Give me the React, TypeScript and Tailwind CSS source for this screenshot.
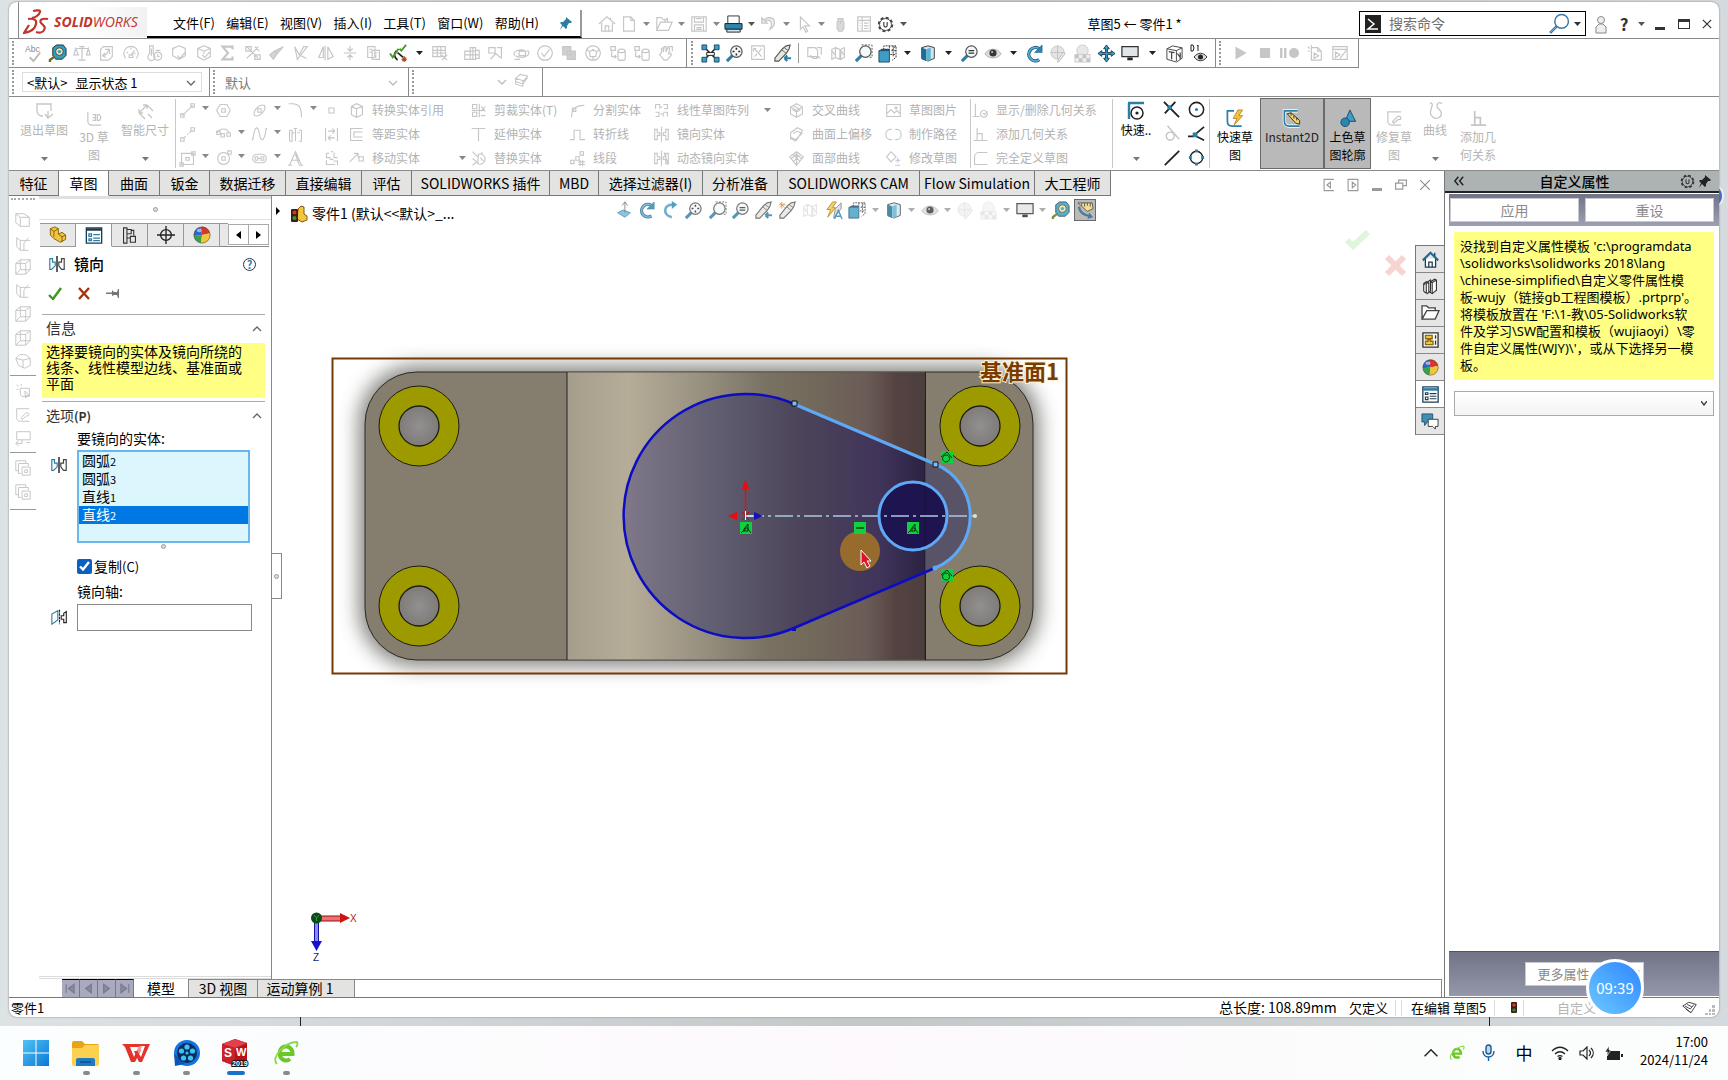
import React, { useState } from 'react';
import type { ReactNode } from 'react';

/* ---------- icon primitives ---------- */

type GProps = { d: string; c?: string; f?: string; w?: number; s?: number; children?: ReactNode };

function G({ d, c = '#c6c6c6', f = 'none', w = 1.3, s = 18, children }: GProps) {
  return (
    <svg width={s} height={s} viewBox="0 0 20 20" fill={f} stroke={c} strokeWidth={w} className="shrink-0">
      <path d={d} />
      {children}
    </svg>
  );
}

const BLUE = '#2b7ea6';
const DARK = '#222';

const P: Record<string, string> = {
  abc: 'M5 14l4 4 7-9',
  scales: 'M10 2v16M6 18h8M3 5h14M3 5l-2 7h5zM17 5l-2 7h4zM7 3h6',
  box1: 'M4 6l3-3h10v11l-4 4H4zM9 6h5v5M13 6c-1 5-3 7-7 7m0 0l3-3m-3 3l4 2',
  gauge: 'M4 16a8 8 0 1 1 12 0M10 12l4-5M5 9l2 1M10 4v2M15 10l-2 1M8 12h4v3H8z',
  therm: 'M4 2h4v9a4 4 0 1 1-4 0zM6 5v8M11 7h5M13 9a4.500 4.500 0 1 0 .1 0M13 11v3h2',
  shield: 'M10 2l7 3v8l-7 4-7-4V5zM3 5l2 0M8 13l3 3 6-7',
  cube: 'M10 2l7 3v9l-7 4-7-4V5zM3 5l7 3 7-3M10 8v10',
  cubeCheck: 'M10 2l7 3v9l-7 4-7-4V5zM3 5l7 3 7-3M10 8v3M8 12l3 3 5-6',
  cross: 'M3 3l13 13M3 16L16 3M2 3h6v5H2zM12 12h6v5h-6zM12 3l5 5',
  brush: 'M17 3l-7 8-3-3zM10 11l-4 6-4-5 5-4',
  slash: 'M3 3l3 14L17 3h-4l-5 9zM10 13l6 3',
  tri: 'M9 2v16M7 3v12H2zM12 3l6 11-6 3z',
  origin: 'M10 2v6m-3-3l3 3 3-3M3 10h14M10 18v-6m-3 3l3-3 3 3',
  docq: 'M3 3h8v12H3zM8 7h8v10H8zM10 10h4M12 12v3M5 6h3M5 9h2',
  table: 'M2 3h14v11H2zM2 7h14M2 10h14M7 3v11M11 3v11M12 12l6 6m0-6l-6 6',
  grid3: 'M2 8h6v9H2zM8 4h6v13H8zM14 7h4v9h-4zM2 12h16M8 8h6M11 4v13',
  flow: 'M2 4h7v6H2zM9 10l7 6M16 3v13M4 17l6-7M11 4l6 0',
  spin: 'M3 13a7 4 0 0 1 13-4M17 7a7 4 0 0 1-13 6M8 8h7v5H8zM3 17h6',
  okc: 'M10 2a8 8 0 1 0 .1 0zM6 10l3 4 6-8',
  sq2: 'M3 3h9v9H3zM8 8h9v9H8z',
  ring: 'M10 2a8 8 0 1 0 .1 0zM10 6l4 3-1 5H7L6 9zM3 6l4 3M17 6l-3 3M10 18v-4',
  cyl: 'M10 8c0-3 8-3 8 0v8c0 3-8 3-8 0zM10 8c0 2 8 2 8 0M2 3h5v4H2zM3 8v6h5m-2-2l2 2-2 2',
  hand: 'M5 9V5l2-1v5l1-6 2 0v6l2-5 2 1-1 6 2-1 1 2-5 6H8l-5-6zM12 3h5v5',
  doc: 'M4 2h8l4 4v12H4zM12 2v4h4',
  home: 'M1 10l9-8 9 8M4 9v9h12V9M8 18v-6h4v6M14 3v3',
  open: 'M2 17V3h5l2 2h5v3M2 17l4-9h13l-4 9zM10 8l4-5',
  save: 'M2 2h16v16H2zM5 2v6h10V2M5 18v-7h10v7M7 4h6M7 14h6M7 16h6',
  undo: 'M2 3v6h6L6 7c5-3 9 1 5 9 7-4 7-13-1-13-2 0-4 1-5 3z',
  arrow: 'M6 2v14l3-3 3 6 2-1-3-6h5z',
  mouse: 'M7 3h6v3l1 1v8l-2 3H8l-2-3V7l1-1zM10 5v4',
  list: 'M3 2h14v16H3zM3 6h14M8 2v16M5 9h1M5 12h1M5 15h1M10 9h5M10 12h5M10 15h5',
  zoomFit: 'M3 2h14v15H3zM6 5l8 9M14 5l-3 4M6 14l3-3M5 5h3M5 5v3',
  prev: 'M2 4h8l3 3v7H2zM5 12a5 5 0 0 0 9 2m0 0l2 2m-2-2l-3 1M12 4h5v8',
  section: 'M2 6l4-2v11l-4 2zM6 4l5 2v11l-5-2M12 6l4-2v11l-4 2zM3 8l2 4M13 8l2 4',
  sheet: 'M3 3h12v14H3zM6 7h6M6 10h6M10 17l7-9',
  line: 'M4 16L16 4M14 2h4v4h-4zM2 14h4v4H2z',
  cline: 'M6 14l2-2M10 10l1-1M12 8l2-2M14 2h4v4h-4zM2 14h4v4H2z',
  rect: 'M3 4h14v13H3zM15 2h4v4h-4zM8 9h4v3H8zM1 15h4v4H1z',
  hex: 'M6 3h8l4 7-4 7H6l-4-7zM8 8h4v4H8z',
  ellipse: 'M4 16A9 6.500 -45 0 1 16 4A9 6.500 -45 0 1 4 16zM8 8h4v4H8z',
  fillet: 'M2 2h4c8 0 11 4 11 16M2 2h3',
  pointI: 'M7 7h6v6H7z',
  arc: 'M3 8c2-6 12-6 13 0M2 6h4v4H2zM14 8h4v4h-4zM7 9h4v4H7z',
  spline: 'M2 17C5-6 9 3 10 10s5 12 8-7M1 15h2M17 3h2',
  planeI: 'M3 5h3v13H3M3 5v13M10 2v16M14 5h3v13h-3M8 3h4M6 8h3M12 8h3',
  circle: 'M10 3a7 7 0 1 0 .1 0zM15 1h4v4h-4zM8 8h4v4H8z',
  slot: 'M7 5h6a5 5 0 0 1 0 10H7A5 5 0 0 1 7 5zM5 8h3v4H5zM12 8h3v4h-3zM8 10h4',
  textA: 'M3 18L10 2l7 16M6 12h8M1 18h5M14 18h5M10 5l4 12',
  flip: 'M3 2v16M17 2v16M6 6h8m0 0l-3-3m3 3l-3 3M14 14H6m0 0l3-3m-3 3l3 3',
  pat: 'M4 4v5h5M4 4h3M13 3v6h4M4 12v5h4M12 13h5v5M9 2h3M8 11h4M8 17h6',
  convert: 'M4 5l6-3 7 3v10l-7 3-6-3zM4 5l6 3 7-3M10 8v10',
  offset: 'M17 3H3v14h14M17 7H7v6h10',
  move: 'M2 14L12 4m0 0H7m5 0v5M13 8h5v5h-5z',
  trim: 'M3 3h5v5H3zM11 2v16M3 12h5v5H3zM13 5l5 6m0-6l-5 6M2 10h16M13 16h5',
  extend: 'M2 3h16M10 3v15',
  replace: 'M3 2l6 6M10 5a6 6 0 1 1-1 11zM12 9l4 4M3 10l5 4-5 4M14 2v3',
  split: 'M3 18C3 8 8 4 18 4M4 7h4v4H4z',
  jog: 'M1 16h5V5h7v11h6',
  seg: 'M2 12h4v4H2zM8 8h4v4H8zM13 2h4v4h-4zM13 12v7M16 12v7M11 14h8M11 17h8',
  linp: 'M3 3h5v5M12 3h5v5h-4M3 12h4v5H3M12 12h5v5M3 3v5M9 6h2M9 14h2M12 13v4',
  mirror: 'M10 1v18M2 4v12h3v-5h3V8H5V4zM18 4v12h-3v-5h-3V8h3V4z',
  dmirror: 'M10 1v18M2 4v12h3v-5h3V8H5V4zM18 4v12h-3v-5h-3V8h3V4zM13 3l5 14',
  inter: 'M10 2l7 4v8l-7 4-7-4V6zM3 6l7 4 7-4M10 10v8M5 9l5 3 5-3M6 4l7 4',
  surfoff: 'M3 8l8-6 6 3-7 12-7-2zM6 9l5-3 4 2M3 13l7 4M7 18l10-10',
  face: 'M10 2l8 6-8 10L2 8zM6 5l8 8M4 10l6-5 6 5M7 13l6-7M10 2v16',
  pic: 'M2 3h16v14H2zM2 14l5-5 4 4 3-3 4 4M12 6h2v2h-2z',
  path: 'M8 4H6a5 6 0 0 0 0 12h2M12 4h2a5 6 0 0 1 0 12h-2',
  modify: 'M7 2l6 6-6 6-5-6zM15 9v6M12 12h6M12 18h6',
  rel: 'M4 2v15M1 17h8M14 10a4 4 0 1 0 .1 0M13 13l2 2 3-4',
  addrel: 'M6 2v15M2 17h16M6 9h6v8',
  fulld: 'M18 3H8a5 5 0 0 0-5 5v9h15',
  exit: 'M9 15H8a5 5 0 0 1-5-5V3h14v7M11 13l3 4 5-4M14 17V10',
  sk3d: 'M3 3v10a4 4 0 0 0 4 4h10M8 6h3v6H8M8 9h3M13 6h2c2 1 2 5 0 6h-2z',
  dim: 'M4 12l8-8m0 0H8m4 0v4M12 4l6 6M4 12l6 6M4 12V8m0 4h4M13 13l4 4',
  repair: 'M17 3H3v9a4 4 0 0 0 4 5h10M8 13l5-5a2 2 0 1 1 3 3l-2 0-5 4z',
  curve: 'M5 2c6 0-2 8 1 12 4 6 12 3 10-3-2-4-5-4-4-7 1-3 4-3 5-1',
  vcube: 'M2 6l5-4h10v10l-5 5H2zM2 6h10v11M12 6l5-4',
  vcube2: 'M2 3h9l6 4v10H7l-5-4zM7 7h10M7 7v10M2 3l5 4',
  vcube3: 'M2 6l5-4h11v11l-5 5H2zM2 6h11v12M13 6l5-4M7 2v11h11M7 13l-5 5',
  vcube4: 'M3 3l4 3v11l-4-4zM7 6h11M7 17h9M16 3l-5 6v8',
  vcube5: 'M2 7l4-4h7l5 4v8l-6 3-7-3zM10 9l8-2M10 9v9M10 9L2 7',
  skn: 'M7 7h10v9H9a3 3 0 0 1-2-3zM3 3l2 2M3 8h2M8 2v2M12 10l5 5-3 0-1 3z',
  moni: 'M3 3h15v9H3zM9 12v4H2m3-3l-3 3 3 3M14 15h4',
  lay: 'M2 2h11v3M2 2v11h3M5 5h11v3M5 5v11h3M9 9h9v9H9zM12 12h3v3h-3z',
  play: 'M5 3l12 7-12 7z',
  docp: 'M6 4h7l4 4v10H6zM13 4v4h4M2 3l2 2M9 10l5 3-5 3zM2 8h2M6 1v2',
  macro: 'M2 3h16v14H2zM2 6h16M5 9l5 3-5 3zM10 16l7-9',
};

/* ---------- coloured icons ---------- */

function Magnifier({ inner, s = 19 }: { inner?: ReactNode; s?: number }) {
  return (
    <svg width={s} height={s} viewBox="0 0 20 20" fill="none" className="shrink-0">
      <path d="M8 12l-6 6" stroke="#2b7ea6" strokeWidth="3.2" />
      <circle cx="12" cy="8" r="6" fill="#f4f8fa" stroke="#555" strokeWidth="1.3" />
      {inner}
    </svg>
  );
}

function GearIcon({ c = '#444', s = 17 }: { c?: string; s?: number }) {
  return (
    <svg width={s} height={s} viewBox="0 0 20 20" fill="none" stroke={c} className="shrink-0">
      <circle cx="10" cy="10" r="8" strokeWidth="2.200" strokeDasharray="3.600 2.680" />
      <circle cx="10" cy="10" r="7" strokeWidth="1.100" />
      <path d="M8 7v4a2 2 0 0 0 4 0V7" strokeWidth="1.400" />
    </svg>
  );
}

function Eye({ s = 18 }: { s?: number }) {
  return (
    <svg width={s} height={s} viewBox="0 0 20 20" className="shrink-0">
      <path d="M1 11c4-7 14-7 18 0-4 6-14 6-18 0z" fill="#ddd" stroke="#999" strokeWidth=".8" />
      <circle cx="10" cy="10" r="4" fill="#3a3632" />
      <circle cx="9" cy="9" r="1.2" fill="#bbb" />
    </svg>
  );
}

function Rotate({ s = 19 }: { s?: number }) {
  return (
    <svg width={s} height={s} viewBox="0 0 20 20" fill="none" className="shrink-0">
      <path d="M15 16.500A7 7 0 1 1 15 5" stroke="#1f5c80" strokeWidth="3.6" />
      <path d="M15 16.500A7 7 0 1 1 15 5" stroke="#5cb0d6" strokeWidth="1.8" />
      <path d="M18 1v8h-8z" fill="#2b86b3" stroke="#1f5c80" strokeWidth=".6" />
    </svg>
  );
}

function Tape({ s = 19 }: { s?: number }) {
  return (
    <svg width={s} height={s} viewBox="0 0 20 20" className="shrink-0">
      <path d="M5 4l4-3h7l3 4v7l-4 4H8l-3-4z" fill="#2f9dbb" stroke="#234" />
      <circle cx="12" cy="8" r="4" fill="#f4e7a0" stroke="#234" strokeWidth=".8" />
      <circle cx="12" cy="8" r="1.800" fill="#2f9dbb" />
      <path d="M7 13l-5 4v2" fill="none" stroke="#6b6a1e" strokeWidth="2.400" />
    </svg>
  );
}

function CubeBlue({ s = 18 }: { s?: number }) {
  return (
    <svg width={s} height={s} viewBox="0 0 20 20" className="shrink-0">
      <path d="M3 4l7-2 7 2v12l-7 3-7-3z" fill="#cfe6ef" stroke="#333" />
      <path d="M3 4l5 2v13l-5-2z" fill="#1f6d92" />
      <path d="M8 6l5-2v14l-5 1z" fill="#5fb2d2" />
    </svg>
  );
}

function CubeDash({ s = 19 }: { s?: number }) {
  return (
    <svg width={s} height={s} viewBox="0 0 20 20" fill="none" className="shrink-0">
      <path d="M6 6V2h13v12l-4 3M12 2v5M19 7h-6M16 2v12M13 11h6M15 6l4-4" stroke="#333" strokeDasharray="2 1" />
      <path d="M1 7h11v12H1z" fill="#3f9cc4" stroke="#1c4d66" />
      <path d="M1 7l3-2h8v2z" fill="#1c4d66" />
    </svg>
  );
}

function Monitor({ s = 18 }: { s?: number }) {
  return (
    <svg width={s} height={s} viewBox="0 0 20 20" className="shrink-0">
      <path d="M1 3h18v11H1z" fill="#e2e5e7" stroke="#333" strokeWidth="1.400" />
      <path d="M7 18h6v-3H7z" fill="#222" />
    </svg>
  );
}

function Flash({ star, s = 19 }: { star?: boolean; s?: number }) {
  return (
    <svg width={s} height={s} viewBox="0 0 20 20" fill="none" className="shrink-0">
      <path d="M18 1l-4 1-4 3-8 10v3h4l8-8 3-5z" fill="#e9e6df" stroke="#555" strokeWidth="1.200" />
      <path d="M9 6l5 4M12 4l4 3" stroke="#666" />
      {star ? (
        <path d="M4 1v7M1 4h7M2 2l5 5M7 2L2 7" stroke="#d58a2a" />
      ) : (
        <path d="M19 15h-7m0 0l3-3m-3 3l3 3" stroke="#2b7ea6" strokeWidth="2.200" />
      )}
    </svg>
  );
}

function Ball({ s = 18 }: { s?: number }) {
  return (
    <svg width={s} height={s} viewBox="0 0 20 20" className="shrink-0">
      <path d="M10 10L8 1a9 9 0 0 0-7 10z" fill="#2f66c4" />
      <path d="M10 10l9-2A9 9 0 0 0 8 1z" fill="#d8352c" />
      <path d="M10 10l-9 1a9 9 0 0 0 8 8z" fill="#38a24a" />
      <path d="M10 10l-1 9a9 9 0 0 0 10-11z" fill="#f0c63a" />
      <circle cx="10" cy="10" r="9" fill="none" stroke="#444" strokeWidth=".6" />
      <ellipse cx="7" cy="5" rx="3" ry="2" fill="#fff" opacity=".5" />
    </svg>
  );
}

const fitIcon = (
  <svg width="19" height="19" viewBox="0 0 20 20" fill="none" className="shrink-0">
    <path d="M4 4l12 12M16 4L4 16" stroke="#222" strokeWidth="1.600" />
    <path d="M6 9h8v3H6z" fill="#fff" stroke="#222" />
    <path d="M1 1h5v5H1zM14 1h5v5h-5zM1 14h5v5H1zM14 14h5v5h-5z" fill="#3f9cc4" stroke="#1c4d66" />
  </svg>
);
const magFit = <Magnifier inner={<path d="M12 4v2M12 10v2M8 8h2M14 8h2" stroke="#222" strokeWidth="1.600" />} />;
const magBox = (
  <Magnifier inner={<path d="M8 1h11v13h-4" stroke="#555" strokeDasharray="2 1.500" />} />
);
const magEq = <Magnifier inner={<path d="M9 7h6M9 9.500h6" stroke="#333" strokeWidth="1.300" />} />;
const panIcon = (
  <svg width="19" height="19" viewBox="0 0 20 20" className="shrink-0">
    <path
      d="M10 1l3 4h-2v4h4V7l4 3-4 3v-2h-4v4h2l-3 4-3-4h2v-4H5v2l-4-3 4-3v2h4V5H7z"
      fill="#3f9cc4"
      stroke="#1c3c50"
    />
  </svg>
);
const paleBall = (
  <svg width="19" height="19" viewBox="0 0 20 20" className="shrink-0">
    <circle cx="9" cy="9" r="7" fill="#e4e4e4" stroke="#c8c8c8" />
    <path d="M9 2v14M2 9h14" stroke="#c2c2c2" />
    <path d="M17 10l-6 8-2 1 1-3 5-7z" fill="#f3f3f3" stroke="#bbb" />
  </svg>
);
const paleScene = (
  <svg width="19" height="19" viewBox="0 0 20 20" className="shrink-0">
    <circle cx="10" cy="7" r="6" fill="#e8e8e8" stroke="#ccc" />
    <path d="M2 11h16v8H2z" fill="#eee" stroke="#ccc" />
    <path d="M2 11h4v4H2zM10 11h4v4h-4zM6 15h4v4H6zM14 15h4v4h-4z" fill="#c4c4c4" />
  </svg>
);
const printIcon = (
  <svg width="19" height="19" viewBox="0 0 20 20" className="shrink-0">
    <path d="M4 1h12v8H4z" fill="#fff" stroke="#333" />
    <path d="M1 9h18v6H1z" fill="#2b86b3" stroke="#222" />
    <path d="M3 15h14v3H3z" fill="#cfe6ef" stroke="#222" />
  </svg>
);
const tex3d = (
  <svg width="19" height="19" viewBox="0 0 20 20" fill="none" className="shrink-0">
    <path d="M2 5l6-3 10 2v11l-6 4-10-3zM2 5l10 2v11M12 7l6-3" stroke="#444" />
    <path d="M4 8l6 1M7 9v7M13 10l3 4M16 9v7" stroke="#444" strokeWidth="1.300" />
  </svg>
);
const checkSketch = (
  <svg width="19" height="19" viewBox="0 0 20 20" fill="none" className="shrink-0">
    <path d="M8 7c-3 3-3 7 1 10M9 9l6 5" stroke="#222" strokeWidth="1.800" />
    <path d="M1 10l3 4 6-9" stroke="#4b9b2c" strokeWidth="2" />
    <path d="M11 5l2 2 5-6" stroke="#4b9b2c" strokeWidth="2" />
    <path d="M13 16h6M16 13v6M14 14l4 4M18 14l-4 4" stroke="#b4441c" strokeWidth="1.200" />
  </svg>
);
const sigma = <G d="M15 6V3H4l6 7-6 7h11v-3" w={2.4} />;
const play = <G d={P.play} f="#c6c6c6" s={16} />;
const stop = <G d="M5 5h10v10H5z" f="#c6c6c6" />;
const pauseRec = (
  <svg width="20" height="18" viewBox="0 0 20 18" fill="#c6c6c6" className="shrink-0">
    <path d="M0 4h2.500v10H0zM4 4h2.500v10H4z" />
    <circle cx="14" cy="9" r="5" />
  </svg>
);
const normalTo = (
  <svg width="18" height="18" viewBox="0 0 20 20" fill="none" className="shrink-0">
    <path d="M3 13l6-3 8 3-6 5z" fill="#6fb9da" stroke="#2b7ea6" />
    <path d="M11 13V1m-3 4l3-4 3 4" stroke="#666" />
  </svg>
);
const magnetA = (
  <svg width="19" height="19" viewBox="0 0 20 20" fill="none" className="shrink-0">
    <path d="M8 1L2 9h4l-3 8 8-10H8l4-6z" fill="#f2c53a" stroke="#a9781a" />
    <path d="M11 8l6-6v6l-8 10z" fill="#ddd" stroke="#777" />
    <path d="M10 19l4-9 4 9M12 16h4" stroke="#2b7ea6" strokeWidth="1.500" />
  </svg>
);
const d1Eye = (
  <svg width="20" height="19" viewBox="0 0 20 19" className="shrink-0">
    <path d="M3 1v6M3 1h2l1 3-1 3H3M9 2l1-1v6" stroke="#222" fill="none" />
    <path d="M6 13c4-5 9-5 13 0-4 5-9 5-13 0z" fill="#ddd" stroke="#333" />
    <circle cx="12.500" cy="13" r="2.500" fill="#222" />
  </svg>
);

/* ---------- generic controls ---------- */

const Tri = ({ c = '#555' }: { c?: string }) => (
  <svg width="7" height="4" viewBox="0 0 7 4" className="shrink-0">
    <path d="M0 0h7L3.500 4z" fill={c} />
  </svg>
);

function Drop({ w = 'w-[17px]', c, label = '更多选项' }: { w?: string; c?: string; label?: string }) {
  return (
    <button aria-label={label} className={`flex h-5 shrink-0 items-center justify-center ${w}`}>
      <Tri c={c} />
    </button>
  );
}

function Btn({ label, w = 'w-6', children }: { label: string; w?: string; children: ReactNode }) {
  return (
    <button aria-label={label} title={label} className={`flex h-6 shrink-0 items-center justify-center ${w}`}>
      {children}
    </button>
  );
}

const Grip = () => <span className="my-[2px] w-[3px] shrink-0 self-stretch border-l-2 border-dotted border-[#999]" />;

const Chevron = ({ c = '#666', up }: { c?: string; up?: boolean }) => (
  <svg width="10" height="6" viewBox="0 0 10 6" fill="none" stroke={c} strokeWidth="1.300" className="shrink-0">
    <path d={up ? 'M1 5l4-4 4 4' : 'M1 1l4 4 4-4'} />
  </svg>
);

/* ---------- title bar ---------- */

const menus = ['文件(F)', '编辑(E)', '视图(V)', '插入(I)', '工具(T)', '窗口(W)', '帮助(H)'];

function PinIcon({ c = '#2b7ea6' }: { c?: string }) {
  return (
    <svg width="12" height="13" viewBox="0 0 12 13" className="shrink-0">
      <path d="M6 0l6 5-1 1-2 0-2 3 0 2-1 1-3-3-3 4 2-5-2-2 1-1 2 0 3-3z" fill={c} />
    </svg>
  );
}

function TitleBar() {
  return (
    <header className="flex h-[37px] shrink-0 items-stretch border-b border-[#8a8a8a] pl-[9px]">
      <div className="flex shrink-0 items-end border-l border-[#888]">
        <div className="mb-px flex h-[30px] w-[128px] items-center gap-[5px] bg-gradient-to-r from-white via-white to-[#f1f1f3] pl-1">
          <svg width="26" height="26" viewBox="0 0 26 26" fill="none" stroke="#c1352b" strokeWidth="2.200" className="shrink-0">
            <path d="M10 2c4-1 8-1 7 1-1 3-4 5-8 6" />
            <path d="M5 10c6-1 9 1 8 5-1 5-6 8-12 9l5-8" />
            <path d="M25 10c-6-1-9 1-7 4 3 3 5 4 3 7-1 3-5 3-8 2" />
          </svg>
          <span className="font-['Open_Sans'] text-[14px] leading-5 text-[#c1352b] italic">
            <b>SOLID</b>WORKS
          </span>
        </div>
      </div>
      <nav className="mt-2 flex w-[435px] shrink-0 items-center border-r-2 border-b-2 border-r-[#999] border-b-black pl-[26px]">
        <div className="flex w-[366px] items-center justify-between text-[13px]">
          {menus.map((m) => (
            <button key={m}>{m}</button>
          ))}
        </div>
        <button aria-label="固定菜单" className="mr-2 ml-auto">
          <PinIcon />
        </button>
      </nav>
      <div className="mt-2 ml-[14px] flex items-center">
        <Btn label="主页" w="w-[22px]"><G d={P.home} /></Btn>
        <Btn label="新建" w="w-[21px]"><G d={P.doc} /></Btn>
        <Drop w="w-[14px]" c="#888" />
        <Btn label="打开" w="w-[21px]"><G d={P.open} /></Btn>
        <Drop w="w-[14px]" c="#888" />
        <Btn label="保存" w="w-[21px]"><G d={P.save} /></Btn>
        <Drop w="w-[14px]" c="#888" />
        <Btn label="打印" w="w-[21px]">{printIcon}</Btn>
        <Drop w="w-[14px]" />
        <Btn label="撤销" w="w-[21px]"><G d={P.undo} f="#ececec" /></Btn>
        <Drop w="w-[14px]" c="#888" />
        <Btn label="选择" w="w-[21px]"><G d={P.arrow} /></Btn>
        <Drop w="w-[14px]" c="#888" />
        <Btn label="重建模型" w="w-[24px]"><G d={P.mouse} f="#d9d9d9" s={17} /></Btn>
        <Btn label="文件属性" w="w-[23px]"><G d={P.list} /></Btn>
        <Btn label="选项" w="w-[21px]"><GearIcon /></Btn>
        <Drop w="w-[14px]" />
      </div>
      <div className="flex-1" />
      <h1 className="mt-2 flex items-center text-[13px] whitespace-nowrap">草图5 ← 零件1 *</h1>
      <div className="flex-1" />
      <label className="mt-[9px] mb-[2px] flex w-[227px] shrink-0 items-center border border-black">
        <svg width="16" height="18" viewBox="0 0 16 18" className="ml-[5px] shrink-0">
          <rect width="16" height="18" fill="#222" />
          <path d="M3 4l6 5-6 5h10" stroke="#fff" strokeWidth="1.500" fill="none" />
        </svg>
        <input aria-label="搜索命令" placeholder="搜索命令" className="ml-2 w-0 flex-1 bg-transparent text-[14px] outline-none placeholder:text-[#6f6f6f]" />
        <svg width="21" height="21" viewBox="0 0 20 20" fill="none" stroke="#3c79a8" className="shrink-0">
          <circle cx="12" cy="8" r="6.500" strokeWidth="1.400" />
          <path d="M7 12l-6 6 1 1 6-6" strokeWidth="1.200" />
        </svg>
        <Drop w="w-[15px]" c="#333" />
      </label>
      <div className="mt-2 flex shrink-0 items-center pl-[3px]">
        <Btn label="登录">
          <svg width="12" height="19" viewBox="0 0 12 19" fill="#eee" stroke="#8a8a8a">
            <circle cx="6" cy="5" r="3.500" />
            <path d="M1 18v-6l3-3h4l3 3v6z" />
          </svg>
        </Btn>
        <button className="w-[22px] text-[17px] leading-5 font-bold text-[#333]">?</button>
        <Drop w="w-[12px]" />
        <Btn label="最小化" w="w-[25px]"><span className="mt-2 h-[3px] w-[10px] bg-[#333]" /></Btn>
        <Btn label="最大化" w="w-[23px]"><span className="h-[10px] w-[12px] border border-t-[3px] border-[#333]" /></Btn>
        <Btn label="关闭"><G d="M3 3l14 14M17 3L3 17" c="#333" w={2} s={12} /></Btn>
      </div>
    </header>
  );
}

/* ---------- tool strip ---------- */

const toolsA: [string, ReactNode][] = [
  ['拼写检查', (
    <svg key="a" width="19" height="22" viewBox="0 0 20 23" fill="none" stroke="#b9b9b9">
      <path d="M6 16l4 4 7-9" strokeWidth="2" />
      <text x="1" y="10" fontSize="9" fill="#8a8a8a" stroke="none" className="font-['Liberation_Sans']">Abc</text>
    </svg>
  )],
  ['测量', <Tape key="t" />],
  ['质量属性', <G key="s" d={P.scales} />],
  ['截面属性', <G key="b" d={P.box1} />],
  ['传感器', <G key="g" d={P.gauge} />],
  ['统计', <G key="th" d={P.therm} />],
  ['检查', <G key="sh" d={P.shield} />],
  ['几何分析', <G key="c" d={P.cubeCheck} />],
  ['方程式', <span key="si">{sigma}</span>],
  ['偏差分析', <G key="x" d={P.cross} />],
  ['拔模分析', <G key="br" d={P.brush} f="#d4d4d4" />],
  ['底切分析', <G key="sl" d={P.slash} />],
  ['对称检查', <G key="tr" d={P.tri} />],
  ['厚度分析', <G key="o" d={P.origin} />],
  ['比较文档', <G key="d" d={P.docq} />],
  ['草图检查', <span key="cs">{checkSketch}</span>],
];
const toolsB: [string, string, string?][] = [
  ['设计算例', P.grid3], ['流体', P.flow], ['运动', P.spin], ['验证', P.okc], ['复制', P.sq2, '#d0d0d0'],
  ['可持续', P.ring], ['成本', P.cyl], ['转换', P.cyl], ['手动', P.hand],
];

function ToolStrip() {
  return (
    <div className="flex h-[29px] w-[1350px] shrink-0 items-center border-r border-b border-[#8a8a8a] pl-[3px]">
      <Grip />
      <div className="ml-[6px] flex w-[390px] shrink-0 items-center justify-between">
        {toolsA.map(([l, ic]) => <Btn key={l} label={l}>{ic}</Btn>)}
      </div>
      <Drop c="#222" />
      <Btn label="设计表"><G d={P.table} /></Btn>
      <div className="ml-[8px] flex w-[218px] shrink-0 items-center justify-between">
        {toolsB.map(([l, d, f]) => <Btn key={l} label={l}><G d={d} f={f} /></Btn>)}
      </div>
      <span className="ml-[8px] w-px self-stretch bg-[#8a8a8a]" />
      <div className="ml-[4px] flex self-stretch"><Grip /></div>
      <div className="ml-[4px] flex items-center">
        <Btn label="整屏显示全图">{fitIcon}</Btn>
        <Btn label="局部放大">{magFit}</Btn>
        <Btn label="放大所选"><G d={P.zoomFit} /></Btn>
        <Btn label="上一视图"><Flash /></Btn>
        <span className="mx-[4px] h-5 w-px bg-[#999]" />
        <Btn label="剖面视图"><G d={P.prev} /></Btn>
        <Btn label="剖切"><G d={P.section} /></Btn>
        <Btn label="区域放大">{magBox}</Btn>
        <Btn label="视图定向"><CubeDash /></Btn>
        <Drop c="#222" />
        <Btn label="显示样式"><CubeBlue /></Btn>
        <Drop c="#222" />
        <Btn label="缩放">{magEq}</Btn>
        <Btn label="隐藏/显示"><Eye /></Btn>
        <Drop c="#222" />
        <Btn label="旋转视图"><Rotate /></Btn>
        <Btn label="编辑外观">{paleBall}</Btn>
        <Btn label="应用布景">{paleScene}</Btn>
        <Btn label="平移">{panIcon}</Btn>
        <Btn label="视图设置"><Monitor /></Btn>
        <Drop w="w-[20px]" c="#222" />
        <Btn label="三维视图">{tex3d}</Btn>
        <Btn label="显示尺寸">{d1Eye}</Btn>
      </div>
      <span className="ml-[5px] w-px self-stretch bg-[#8a8a8a]" />
      <div className="ml-[3px] flex self-stretch"><Grip /></div>
      <div className="ml-[6px] flex items-center gap-px">
        <Btn label="播放">{play}</Btn>
        <Btn label="停止">{stop}</Btn>
        <Btn label="录制">{pauseRec}</Btn>
        <Btn label="新建宏"><G d={P.docp} /></Btn>
        <Btn label="编辑宏"><G d={P.macro} /></Btn>
      </div>
    </div>
  );
}

function StateStrip() {
  return (
    <div className="flex h-[29px] shrink-0 items-stretch border-b border-[#8a8a8a] pl-[3px]">
      <Grip />
      <button className="my-1 ml-[7px] flex w-[180px] items-center justify-between border border-[#dedede] pt-px pr-[5px] pl-1 text-[13px]">
        <span className="flex gap-2"><span>&lt;默认&gt;</span><span>显示状态 1</span></span>
        <Chevron />
      </button>
      <span className="ml-[7px] w-px bg-[#8a8a8a]" />
      <div className="ml-[3px] flex"><Grip /></div>
      <button className="ml-[9px] flex w-[178px] items-center justify-between pt-px pr-[5px] text-[13px] text-[#7a7a7a]">
        <span>默认</span>
        <Chevron c="#bbb" />
      </button>
      <span className="ml-[5px] w-px bg-[#8a8a8a]" />
      <div className="ml-[3px] flex"><Grip /></div>
      <button aria-label="图层" className="flex w-[92px] items-center justify-end"><Chevron c="#bbb" /></button>
      <Btn label="图层属性" w="w-[30px]"><G d="M2 8l6-5 9 2-5 6zM2 12l9 3 6-8M2 8v7l9 3v-7" s={16} /></Btn>
      <span className="ml-[5px] w-px bg-[#8a8a8a]" />
    </div>
  );
}

/* ---------- ribbon ---------- */

const gridRows: [string, string, boolean][][] = [
  [['直线', P.line, true], ['多边形', P.hex, false], ['椭圆', P.ellipse, true], ['圆角', P.fillet, true], ['点', P.pointI, false]],
  [['中心线', P.cline, false], ['圆弧', P.arc, true], ['样条曲线', P.spline, true], ['基准面', P.planeI, false], ['翻转', P.flip, false]],
  [['矩形', P.rect, true], ['圆', P.circle, true], ['槽口', P.slot, true], ['文字', P.textA, false], ['阵列', P.pat, false]],
];

type Cmd = [string, string, string?];
const cols: { w: string; sep?: boolean; items: Cmd[] }[] = [
  { w: 'w-[122px]', items: [['转换实体引用', P.convert], ['等距实体', P.offset], ['移动实体', P.move, 'mr-[3px]']] },
  { w: 'w-[99px]', items: [['剪裁实体(T)', P.trim], ['延伸实体', P.extend], ['替换实体', P.replace]] },
  { w: 'w-[84px]', items: [['分割实体', P.split], ['转折线', P.jog], ['线段', P.seg]] },
  { w: 'w-[135px]', items: [['线性草图阵列', P.linp, 'mr-[16px]'], ['镜向实体', P.mirror], ['动态镜向实体', P.dmirror]] },
  { w: 'w-[97px]', items: [['交叉曲线', P.inter], ['曲面上偏移', P.surfoff], ['面部曲线', P.face]] },
  { w: 'w-[86px]', sep: true, items: [['草图图片', P.pic], ['制作路径', P.path], ['修改草图', P.modify]] },
  { w: 'w-[141px]', sep: true, items: [['显示/删除几何关系', P.rel], ['添加几何关系', P.addrel], ['完全定义草图', P.fulld]] },
];

function Big({ icon, lines, w, drop, tone = 'text-[#b5b5b5]', active }: {
  icon: ReactNode; lines: string[]; w: string; drop?: boolean; tone?: string; active?: boolean;
}) {
  return (
    <button
      className={`flex shrink-0 flex-col items-center self-stretch text-[12px] leading-[18px] whitespace-nowrap ${w} ${tone} ${
        active ? 'my-px border border-[#6a6a6a] bg-[#b9b9b9] pt-[10px]' : drop ? 'pt-1' : 'pt-[12px]'
      }`}
    >
      {icon}
      {lines.map((l) => <span key={l}>{l}</span>)}
      {drop && <span className="mt-auto mb-[9px]"><Tri c="#777" /></span>}
    </button>
  );
}

const Sep = () => <span className="my-[2px] w-px shrink-0 self-stretch bg-[#c9c9c9]" />;

const sketchTools: [string, ReactNode][] = [
  ['剪裁', <svg key="1" width="19" height="19" viewBox="0 0 20 20" fill="none"><path d="M2 2l16 16M14 2L3 14" stroke="#222" strokeWidth="2" /><circle cx="8" cy="8" r="2.400" fill={BLUE} /></svg>],
  ['圆', <svg key="2" width="19" height="19" viewBox="0 0 20 20" fill="none"><circle cx="10" cy="10" r="7.500" stroke="#222" strokeWidth="1.600" /><circle cx="10" cy="10" r="1.600" fill={BLUE} /></svg>],
  ['相切', <G key="3" d="M5 2l13 15M8 9a4.500 4.500 0 1 0 .1 0" w={1.6} />],
  ['重合', <svg key="4" width="19" height="19" viewBox="0 0 20 20" fill="none"><path d="M18 3L6 13H1M8 12l10 5" stroke="#222" strokeWidth="1.800" /><path d="M6 9h5v5H6z" fill={BLUE} /></svg>],
  ['直线', <G key="5" d="M2 18L18 2" c={DARK} w={2} />],
  ['周边圆', <svg key="6" width="19" height="19" viewBox="0 0 20 20" fill="none"><circle cx="10" cy="10" r="6.500" stroke="#222" strokeWidth="1.500" /><path d="M8.500 1.500h3v3h-3zM8.500 15.500h3v3h-3zM2 8.500h3v3H2zM15 8.500h3v3h-3z" fill={BLUE} /></svg>],
];

function Ribbon() {
  return (
    <div className="flex h-[74px] shrink-0 items-stretch overflow-hidden border-b border-[#8a8a8a] pl-[6px]">
      <Big w="w-[58px]" drop icon={<G d={P.exit} s={20} />} lines={['退出草图']} />
      <Big w="w-[42px]" icon={<G d={P.sk3d} s={19} />} lines={['3D 草', '图']} />
      <Big w="w-[60px]" drop icon={<G d={P.dim} s={20} />} lines={['智能尺寸']} />
      <Sep />
      <div className="flex w-[171px] shrink-0 flex-col pt-px">
        {gridRows.map((row) => (
          <div key={row[0][0]} className="flex h-6 items-center">
            {row.map(([l, d, dd]) => (
              <div key={l} className="flex w-9 shrink-0">
                <Btn label={l} w="w-[22px]"><G d={d} s={17} /></Btn>
                {dd && <Drop w="w-[14px]" c="#888" />}
              </div>
            ))}
          </div>
        ))}
      </div>
      {cols.map((c) => (
        <React.Fragment key={c.items[0][0]}>
          <div className={`flex shrink-0 flex-col pt-px ${c.w}`}>
            {c.items.map(([l, d, dd]) => (
              <div key={l} className="flex h-6 items-center">
                <button className="flex items-center gap-[7px] text-[12px] whitespace-nowrap text-[#b3b3b3]">
                  <span className="flex w-[18px] justify-end"><G d={d} s={17} /></span>
                  {l}
                </button>
                {dd && <span className={`ml-auto ${dd}`}><Tri c="#888" /></span>}
              </div>
            ))}
          </div>
          {c.sep && <Sep />}
        </React.Fragment>
      ))}
      <Big
        w="w-[46px]"
        drop
        tone="text-black"
        icon={
          <svg width="20" height="20" viewBox="0 0 20 20" fill="none">
            <path d="M2 2h16M3 2v16" stroke={BLUE} strokeWidth="2.400" />
            <circle cx="11" cy="12" r="6" stroke="#222" strokeWidth="1.500" />
            <circle cx="11" cy="12" r="1.600" fill="#222" />
          </svg>
        }
        lines={['快速..']}
      />
      <div className="grid w-[50px] shrink-0 grid-cols-2 grid-rows-3 place-items-center">
        {sketchTools.map(([l, ic]) => <Btn key={l} label={l}>{ic}</Btn>)}
      </div>
      <Sep />
      <Big
        w="w-[50px]"
        tone="text-black"
        icon={
          <svg width="20" height="19" viewBox="0 0 20 20" fill="none">
            <path d="M9 2H2v11c0 3 2 5 5 5h10" stroke={BLUE} strokeWidth="1.800" />
            <path d="M13 1L8 10h4l-3 7 9-10h-4l4-6z" fill="#f5c33b" stroke="#a9781a" strokeWidth=".8" />
          </svg>
        }
        lines={['快速草', '图']}
      />
      <Big
        w="w-[64px]"
        active
        tone="text-[#222]"
        icon={
          <svg width="20" height="19" viewBox="0 0 20 20" fill="none">
            <path d="M16 2H2v11c0 3 2 5 5 5h11" stroke="#fff" strokeWidth="3.400" />
            <path d="M16 2H2v11c0 3 2 5 5 5h11" stroke={BLUE} strokeWidth="1.800" />
            <path d="M5 5l4-1 9 8v4l-4-1z" fill="#f3d66a" stroke="#333" />
            <path d="M9 4v3M12 7v3M15 9v3" stroke="#333" />
          </svg>
        }
        lines={['Instant2D']}
      />
      <Big
        w="w-[47px]"
        active
        tone="text-black"
        icon={
          <svg width="20" height="19" viewBox="0 0 20 20">
            <path d="M12 1l6 12H7z" fill="#3f9cc4" stroke="#1c4d66" />
            <circle cx="7" cy="14" r="4.500" fill="#2b86b3" stroke="#1c4d66" />
          </svg>
        }
        lines={['上色草', '图轮廓']}
      />
      <Big w="w-[46px]" icon={<G d={P.repair} s={19} />} lines={['修复草', '图']} />
      <Big w="w-[36px]" drop icon={<G d={P.curve} s={20} />} lines={['曲线']} />
      <Big w="w-[50px]" icon={<G d={P.addrel} s={19} w={1.8} />} lines={['添加几', '何关系']} />
    </div>
  );
}

/* ---------- command tabs ---------- */

const tabs: [string, string][] = [
  ['特征', 'w-[50px]'], ['草图', 'w-[50px]'], ['曲面', 'w-[51px]'], ['钣金', 'w-[50px]'], ['数据迁移', 'w-[76px]'],
  ['直接编辑', 'w-[76px]'], ['评估', 'w-[50px]'], ['SOLIDWORKS 插件', 'w-[138px]'], ['MBD', 'w-[49px]'],
  ['选择过滤器(I)', 'w-[104px]'], ['分析准备', 'w-[75px]'], ['SOLIDWORKS CAM', 'w-[142px]'],
  ['Flow Simulation', 'w-[115px]'], ['大工程师', 'w-[76px]'],
];

function CommandTabs() {
  const [active, setActive] = useState('草图');
  return (
    <div className="flex h-[25px] shrink-0 items-stretch">
      {tabs.map(([t, w]) => (
        <button
          key={t}
          onClick={() => setActive(t)}
          className={`shrink-0 border-r border-b text-[14px] leading-6 whitespace-nowrap ${w} ${
            t === active ? 'border-r-[#777] border-b-white bg-white' : 'border-[#777] bg-[#e3e3e1]'
          }`}
        >
          {t}
        </button>
      ))}
      <div className="mr-[7px] ml-auto flex shrink-0 items-center pt-[3px]">
        <Btn label="左侧面板"><G d="M17 2H3v16h14M12 6l-5 4 5 4z" c="#9a9a9a" s={14} w={1.6} /></Btn>
        <Btn label="右侧面板"><G d="M3 2h14v16H3zM9 6l5 4-5 4z" c="#9a9a9a" s={14} w={1.6} /></Btn>
        <Btn label="最小化文档"><span className="mt-2 h-[3px] w-[10px] bg-[#9a9a9a]" /></Btn>
        <Btn label="还原文档"><G d="M6 7V2h13v9h-5M1 7h12v10H1z" c="#9a9a9a" s={12} w={2} /></Btn>
        <Btn label="关闭文档"><G d="M2 2l16 16M18 2L2 18" c="#8a8a8a" s={12} w={1.8} /></Btn>
      </div>
    </div>
  );
}

/* ---------- left side ---------- */

const sideTools = [
  [P.vcube2, P.vcube4, P.vcube3, P.vcube4, P.vcube3, P.vcube3, P.vcube5],
  [P.skn, P.repair, P.moni],
  [P.lay, P.lay],
];

function SideStrip() {
  return (
    <div className="flex w-[30px] shrink-0 flex-col items-center pt-[2px] pr-[2px]">
      <span className="h-[3px] w-6 border-t-2 border-dotted border-[#aaa]" />
      <div className="flex flex-col items-center pt-[7px]">
        {sideTools.map((g, i) => (
          <div key={i} className="mb-[3px] flex w-full flex-col items-center border-b border-[#999] px-1 pb-px last:mb-0 last:pb-[5px]">
            {g.map((d, j) => (
              <button key={j} aria-label={`视图工具 ${i + 1}-${j + 1}`} className="flex h-[24px] items-center justify-center not-first:-mt-px odd:mb-px">
                <G d={d} s={18} w={1.1} />
              </button>
            ))}
          </div>
        ))}
      </div>
    </div>
  );
}

const mirrorIcon = (
  <svg width="18" height="18" viewBox="0 0 20 20" fill="none" strokeWidth="1.300" className="shrink-0">
    <path d="M2 4v12h2l4-4V8H5V4z" stroke={BLUE} />
    <path d="M10 1v18" stroke="#222" strokeWidth="1.600" />
    <path d="M18 4v12h-3l-3-4V8h3V4z" stroke="#444" />
  </svg>
);

function PropertyPanel() {
  const [sel, setSel] = useState('直线2');
  const pTabs: [string, ReactNode][] = [
    ['特征树', <svg key="1" width="19" height="18" viewBox="0 0 20 20"><path d="M2 3l5-2 4 2v6l4-2 4 3v5l-6 3-7-4-4-4z" fill="#f2c53a" stroke="#7a5a12" /><path d="M2 3l4 3v6M6 6l5-3M11 9l4 3v6M15 12l4-2" stroke="#7a5a12" fill="none" /></svg>],
    ['属性', <svg key="2" width="18" height="17" viewBox="0 0 20 20" fill="none"><path d="M1 1h18v18H1z" fill="#fff" stroke="#1c3c50" strokeWidth="1.600" /><path d="M1 3h18" stroke="#1c3c50" strokeWidth="3" /><path d="M4 8h3v3H4zM4 14h3v2H4zM9 9h8M9 13h8M9 16h8" stroke={BLUE} strokeWidth="1.500" /></svg>],
    ['配置', <svg key="3" width="17" height="17" viewBox="0 0 20 20" fill="none" stroke="#333" strokeWidth="1.300"><path d="M3 1h4v18H3zM7 3h5v5H7M12 4h3v6M7 13h4M11 11h6v7h-6z" /></svg>],
    ['尺寸', <svg key="4" width="18" height="18" viewBox="0 0 20 20" fill="none" stroke="#222" strokeWidth="1.500"><circle cx="10" cy="10" r="6" /><path d="M10 0v20M0 10h20" /></svg>],
    ['外观', <Ball key="5" />],
  ];
  return (
    <aside className="flex w-[233px] shrink-0 flex-col border-r border-[#888]">
      <div className="flex h-[24px] items-center justify-center border-t-[3px] border-b border-[#e0e0e0]">
        <span className="size-[5px] rounded-full border border-[#999] bg-[#ddd]" />
      </div>
      <div className="mt-[3px] mr-[2px] ml-[1px] flex h-[24px] items-stretch border-b border-[#888]">
        {pTabs.map(([l, ic], i) => (
          <button
            key={l}
            aria-label={l}
            className={`-mb-px flex w-9 shrink-0 items-center justify-center border-t border-r border-b border-[#999] ${i === 1 ? 'border-b-white bg-white' : 'bg-[#e8e8e8]'}`}
          >
            {ic}
          </button>
        ))}
        <span className="flex-1 border-t border-[#999] bg-[#e8e8e8]" />
        <button aria-label="向左" className="my-px flex w-[21px] items-center justify-center border border-[#aaa] bg-white">
          <svg width="5" height="8" viewBox="0 0 5 8"><path d="M5 0v8L0 4z" /></svg>
        </button>
        <button aria-label="向右" className="my-px flex w-[20px] items-center justify-center border border-l-0 border-[#aaa] bg-white">
          <svg width="5" height="8" viewBox="0 0 5 8"><path d="M0 0v8l5-4z" /></svg>
        </button>
      </div>

      <div className="flex flex-col pr-[6px] pl-[3px]">
        <div className="flex h-[34px] items-center pr-[9px] pl-[6px]">
          {mirrorIcon}
          <h2 className="ml-2 text-[15px] font-medium">镜向</h2>
          <button aria-label="帮助" className="ml-auto flex size-[13px] items-center justify-center rounded-full border border-[#234] text-[11px] leading-3 font-bold text-[#2b7ea6]">?</button>
        </div>
        <div className="flex h-[34px] items-start gap-[16px] border-b border-[#aaa] pt-[6px] pl-[6px]">
          <button aria-label="确定"><svg width="14" height="13" viewBox="0 0 14 13" fill="none"><path d="M1 8l4 4 8-11" stroke="#3c9a1e" strokeWidth="2.400" /></svg></button>
          <button aria-label="取消"><svg width="12" height="13" viewBox="0 0 12 13" fill="none"><path d="M1 1l10 11M11 1L1 12" stroke="#a8320e" strokeWidth="2.400" /></svg></button>
          <button aria-label="保持可见"><svg width="14" height="12" viewBox="0 0 14 12" fill="#777"><path d="M0 5.500h6V7H0zM6 3l2 2h3l1-3h1v9h-1l-1-3H8l-2 1z" /></svg></button>
        </div>

        <button className="flex h-[27px] items-center justify-between pr-[3px] pl-1 text-[15px] text-[#333]">
          <span>信息</span><Chevron up />
        </button>
        <p className="mt-px h-[55px] bg-[#ffff84] pr-4 pl-1 text-[14px] leading-[16px] break-all">
          选择要镜向的实体及镜向所绕的线条、线性模型边线、基准面或平面
        </p>
        <button className="mt-[3px] flex h-[28px] items-center justify-between border-t border-[#aaa] pr-[3px] pl-1 text-[#333]">
          <span className="text-[14px]">选项<b className="text-[12px]">(P)</b></span><Chevron up />
        </button>

        <span id="entities" className="ml-[35px] h-[21px] text-[14px] leading-[19px]">要镜向的实体:</span>
        <div className="flex items-start">
          <span className="mt-[6px] ml-[8px] w-[27px]">{mirrorIcon}</span>
          <ul role="listbox" aria-labelledby="entities" className="h-[93px] w-[173px] border-2 border-[#6bb6ec] bg-[#dcf6fd] text-[14px] leading-[16px]">
            {['圆弧2', '圆弧3', '直线1', '直线2'].map((t) => (
              <li
                key={t}
                role="option"
                aria-selected={t === sel}
                onClick={() => setSel(t)}
                className={`h-[18px] pl-[3px] ${t === sel ? 'bg-[#0078e4] text-white' : ''}`}
              >
                {t.slice(0, 2)}<span className="text-[11px]">{t.slice(2)}</span>
              </li>
            ))}
          </ul>
        </div>
        <div className="flex h-[16px] items-start pt-px pl-[119px]">
          <span className="size-[5px] rounded-full border border-[#999] bg-[#ddd]" />
        </div>
        <label className="ml-[35px] flex h-[15px] items-center gap-[2px] text-[14px]">
          <input type="checkbox" defaultChecked className="size-[15px] accent-[#0a5fc0]" />
          <span>复制<span className="text-[13px]">(C)</span></span>
        </label>
        <label htmlFor="axis" className="mt-[7px] ml-[35px] h-[22px] text-[14px] leading-[21px]">镜向轴:</label>
        <div className="mt-px flex items-center">
          <span className="ml-[9px] w-[26px]">
            <svg width="17" height="17" viewBox="0 0 20 20" fill="none" strokeWidth="1.300">
              <path d="M1 18V6l7-4v11z" stroke={BLUE} />
              <path d="M10 1v17" stroke="#222" strokeDasharray="3 1" />
              <path d="M18 3v13h-3v-4h-3V8h3V5z" stroke="#222" />
            </svg>
          </span>
          <input id="axis" className="h-[27px] w-[175px] border border-[#8a8a8a] bg-white px-1 text-[14px]" />
        </div>
      </div>
      <div className="mt-auto h-[3px] border-t border-b border-[#dcdcdc]" />
    </aside>
  );
}

/* ---------- model viewport ---------- */

const Relation = ({ x, y, kind }: { x: number; y: number; kind: 'fix' | 'hor' | 'tan' }) => (
  <g transform={`translate(${x - 6} ${y - 6})`} stroke="#06350c" fill="none">
    <rect width="12" height="12" fill="#12cf42" stroke="none" />
    {kind === 'fix' && <path d="M4 10V7l4-5v5l3 4M1 11l3-3M5 6h3v3H5z" />}
    {kind === 'hor' && <path d="M2 6h8" strokeWidth="1.400" />}
    {kind === 'tan' && <path d="M0 6l6-5 5 6M5 4a3.500 3.500 0 1 0 .1 0" />}
  </g>
);

function Model() {
  const holes = [[419, 427], [419, 607], [980, 427], [980, 607]];
  const lobe = 'M794 405L935 465A56 56 0 0 1 935 569L794 629A122 122 0 1 1 794 405z';
  return (
    <svg width="760" height="350" viewBox="320 340 760 350" className="absolute top-[143px] left-[48px]" fill="none">
      <defs>
        <linearGradient id="bore" gradientUnits="userSpaceOnUse" x1="567" x2="925" y1="0" y2="0">
          <stop offset="0" stopColor="#a59d8b" />
          <stop offset=".17" stopColor="#b5ad98" />
          <stop offset=".36" stopColor="#9b9382" />
          <stop offset=".55" stopColor="#7a7263" />
          <stop offset=".7" stopColor="#71685a" />
          <stop offset=".84" stopColor="#6b5b57" />
          <stop offset=".92" stopColor="#544240" />
          <stop offset="1" stopColor="#4c3f3e" />
        </linearGradient>
        <linearGradient id="lobe" gradientUnits="userSpaceOnUse" x1="624" x2="925" y1="0" y2="0">
          <stop offset="0" stopColor="#7e7889" />
          <stop offset=".35" stopColor="#5d5a6d" />
          <stop offset=".6" stopColor="#4b4359" />
          <stop offset=".85" stopColor="#40345a" />
          <stop offset="1" stopColor="#2b2342" />
        </linearGradient>
        <radialGradient id="hole"><stop offset="0" stopColor="#929090" /><stop offset="1" stopColor="#7e7b78" /></radialGradient>
        <filter id="soft" x="-10%" y="-20%" width="120%" height="140%"><feGaussianBlur stdDeviation="10" /></filter>
        <clipPath id="right"><path d="M925 340h120v350H925z" /></clipPath>
      </defs>
      <rect x="359" y="367" width="680" height="300" rx="57" fill="#6b6963" opacity=".85" filter="url(#soft)" />
      <rect x="365" y="373" width="668" height="288" rx="52" fill="#857e6e" stroke="#2a2a28" />
      <path d="M567 373.500h358v287H567z" fill="url(#bore)" />
      <path d="M567 373v288M925.500 373v288" stroke="#222" />
      {holes.map(([x, y]) => (
        <g key={`${x}-${y}`} stroke="#1c1c10">
          <circle cx={x} cy={y} r="40" fill="#9d9a00" />
          <circle cx={x} cy={y} r="20" fill="url(#hole)" strokeWidth="1.300" />
        </g>
      ))}
      <path d={lobe} fill="url(#lobe)" />
      <path d={lobe} fill="#595368" clipPath="url(#right)" />
      <circle cx="913" cy="517" r="34" fill="#1d1450" />
      <path d="M925 400v261" stroke="#15101c" strokeOpacity=".5" />
      <path d="M935 569L794 629A122 122 0 1 1 794 405" stroke="#0c0cc4" strokeWidth="2.500" />
      <path d="M746 517h229" stroke="#a9cbe0" strokeDasharray="18 4 3 4" strokeWidth="1.300" />
      <g stroke="#5fa8f5" strokeWidth="3">
        <path d="M794 405L935 465A56 56 0 0 1 935 569" />
        <circle cx="913" cy="517" r="34" />
      </g>
      <path d="M792 402h5v5h-5zM933 463h5v5h-5z" fill="#7fbcfb" stroke="#111" />
      <path d="M792 628h4v4h-4z" fill="#0c0cc4" />
      <circle cx="935" cy="569" r="2.500" fill="#5fa8f5" />
      <circle cx="975" cy="517" r="2" fill="#cfe6ef" />
      <path d="M332.500 359.500h734v315h-734z" stroke="#743a05" strokeWidth="2" />
      <path d="M745.500 517v-30" stroke="#e01010" strokeWidth="1.500" />
      <path d="M745.500 480l3.500 10h-7zM728 517l9-4v8z" fill="#e80c0c" />
      <path d="M763 517l-9-4v8z" fill="#1313b8" />
      <path d="M742 513l7 8M749 513l-7 8" stroke="#a11" />
      <path d="M745.500 512v9M745 517h8" stroke="#fff" />
      <circle cx="860" cy="552" r="20" fill="#976b2d" />
      <Relation x={746} y={529} kind="fix" />
      <Relation x={860} y={529} kind="hor" />
      <Relation x={913} y={529} kind="fix" />
      <Relation x={947} y={458} kind="tan" />
      <Relation x={947} y={576} kind="tan" />
      <path d="M861 551v15l3-3 3 6 3-2-3-5h4z" fill="#e3122a" stroke="#fff" />
      <text x="980" y="381" fontSize="22" fontWeight="700" fill="#7a3c00" stroke="#fff3d6" strokeWidth="2" paintOrder="stroke" className="font-['Noto_Sans_CJK_SC',sans-serif]">
        基准面1
      </text>
    </svg>
  );
}

function Triad() {
  return (
    <svg width="56" height="60" viewBox="308 910 56 60" className="absolute bottom-[9px] left-[36px] font-['Liberation_Sans']">
      <path d="M317 916h24v5h-24z" fill="#f07070" stroke="#8a1414" />
      <path d="M340 913l10 5-10 5z" fill="#cc1414" />
      <path d="M314.500 920h4v22h-4z" fill="#8a8af5" stroke="#1414a0" />
      <path d="M311 941h11l-5.500 10z" fill="#1414cc" />
      <circle cx="316.500" cy="918" r="5.500" fill="#0b4a16" />
      <path d="M314 915l2.500 3 2.500-3M316.500 918v3" stroke="#2aa03a" fill="none" />
      <text x="350" y="922" fontSize="10" fill="#b02020">X</text>
      <text x="313" y="961" fontSize="10" fill="#1c1c80">Z</text>
    </svg>
  );
}

const taskTabs: [string, ReactNode][] = [
  ['主页', <svg key="1" width="17" height="17" viewBox="0 0 20 20" fill="none" stroke="#1c3c50" strokeWidth="1.500"><path d="M4 9v10h12V9" fill="#fff" /><path d="M1 11l9-9 9 9" stroke="#1f6d92" strokeWidth="2.600" /><path d="M8 19v-6h4v6M15 2v4" /></svg>],
  ['设计库', <svg key="2" width="17" height="18" viewBox="0 0 20 20" fill="#fff" stroke="#333" strokeWidth="1.300"><path d="M2 7l3-2v12l-1 1-2-2zM5 6l5-3v13l-4 3-1-2zM10 5l5-3 2 1v12l-5 4-3-2M8 5v13M12 6v12M2 7l2 1M5 6l3 1M10 5l2 1 5-3" /></svg>],
  ['文件', <svg key="3" width="19" height="16" viewBox="0 0 20 17" fill="#fff" stroke="#444" strokeWidth="1.400"><path d="M1 15V1h5l2 2h7v3M1 15L6 6h13l-4 9z" /></svg>],
  ['视图调色板', <svg key="4" width="17" height="16" viewBox="0 0 20 19" fill="#fff" stroke="#333" strokeWidth="1.600"><path d="M1 1h18v17H1z" /><path d="M4 4h8v4H4zM4 15v-4h3v-2h3v2h3v4z" fill="#f2c53a" stroke="#8a6a12" /><path d="M16 4v4M16 10v5" /></svg>],
  ['外观', <Ball key="5" s={17} />],
  ['自定义属性', <svg key="6" width="17" height="17" viewBox="0 0 20 20" fill="none"><path d="M1 1h18v18H1z" fill="#fff" stroke="#1c3c50" strokeWidth="1.500" /><path d="M1 4h18" stroke={BLUE} strokeWidth="3" /><path d="M4 8h3v2H4zM4 13h3v3H4zM9 9h8M9 12h8M9 15h8" stroke="#1c3c50" strokeWidth="1.300" /></svg>],
  ['论坛', <svg key="7" width="18" height="17" viewBox="0 0 20 19"><path d="M1 1h12v9H7l-3 4v-4H1z" fill="#3f8fb5" stroke="#1c4d66" /><path d="M8 7h11v8h-3v3l-3-3H8z" fill="#fff" stroke="#333" /></svg>],
];

function Viewport() {
  return (
    <section className="relative min-w-0 flex-1 overflow-hidden">
      <div className="flex items-start pt-[7px] pl-[4px]">
        <button className="flex items-center text-[14px] leading-5 whitespace-nowrap">
          <svg width="5" height="8" viewBox="0 0 5 8" className="-mt-1"><path d="M0 0v8l4-4z" /></svg>
          <svg width="17" height="19" viewBox="0 0 17 19" className="mr-[4px] ml-[10px]">
            <path d="M7 5l3-3 3 1v7l3 2v4l-5 2-5-3z" fill="#f2c53a" stroke="#7a5a12" />
            <rect y="5" width="7" height="13" rx="1" fill="#3b1d12" />
            <circle cx="3.500" cy="8.500" r="2" fill="#d8352c" />
            <circle cx="3.500" cy="14" r="2" fill="#2f9d3a" />
          </svg>
          零件1 (默认&lt;&lt;默认&gt;_...
        </button>
      </div>
      <div className="absolute top-[2px] left-[340px] flex items-center opacity-80">
        <div className="flex w-[257px] items-center justify-between">
          <Btn label="正视于" w="w-[23px]">{normalTo}</Btn>
          <Btn label="旋转" w="w-[23px]"><Rotate s={18} /></Btn>
          <Btn label="翻滚" w="w-[23px]">
            <svg width="18" height="18" viewBox="0 0 20 20" fill="none"><path d="M12 18C2 16 2 4 13 4" stroke="#4a9cc4" strokeWidth="3" /><path d="M12 0v9l6-5z" fill="#2b86b3" /></svg>
          </Btn>
          <Btn label="整屏显示" w="w-[23px]">{magFit}</Btn>
          <Btn label="局部放大" w="w-[23px]">{magBox}</Btn>
          <Btn label="缩放" w="w-[23px]">{magEq}</Btn>
          <Btn label="上一视图" w="w-[23px]"><Flash /></Btn>
          <Btn label="动态" w="w-[23px]"><Flash star /></Btn>
          <Btn label="剖面" w="w-[23px]"><G d={P.section} c="#ddd" /></Btn>
          <Btn label="注解" w="w-[23px]">{magnetA}</Btn>
          <Btn label="视图定向" w="w-[23px]"><CubeDash s={18} /></Btn>
        </div>
        <Drop w="w-[13px]" c="#999" />
        <Btn label="显示样式" w="w-[23px]"><CubeBlue /></Btn>
        <Drop w="w-[13px]" c="#999" />
        <Btn label="隐藏项目" w="w-[23px]"><Eye /></Btn>
        <Drop w="w-[13px]" c="#999" />
        <span className="flex opacity-50">
          <Btn label="编辑外观" w="w-[23px]">{paleBall}</Btn>
          <Btn label="布景" w="w-[23px]">{paleScene}</Btn>
        </span>
        <Drop w="w-[13px]" c="#999" />
        <Btn label="视图设置" w="w-[23px]"><Monitor /></Btn>
        <Drop w="w-[13px]" c="#999" />
        <Btn label="测量" w="w-[23px]"><Tape /></Btn>
        <button aria-label="草图捕捉" className="ml-[2px] flex h-[22px] w-[22px] items-center justify-center border border-[#444] bg-[#aaa]">
          <svg width="19" height="19" viewBox="0 0 20 20" fill="none">
            <path d="M2 2h15l1 6-6 3z" fill="#f3d66a" stroke="#333" />
            <path d="M6 2v3M9 2v4M12 2v3M15 2v4" stroke="#333" />
            <path d="M3 6c1 6 5 9 12 10" stroke="#1f5c80" strokeWidth="2.400" />
            <path d="M18 17l-6 2 2-7z" fill="#1f5c80" />
          </svg>
        </button>
      </div>

      <Model />
      <Triad />

      <svg width="64" height="50" viewBox="0 0 64 50" fill="none" className="absolute top-[32px] right-[37px]">
        <path d="M4 12l6 6L25 4" stroke="#e0f6dc" strokeWidth="6" />
        <path d="M44 29l17 17M61 29L44 46" stroke="#f7d3d1" strokeWidth="6" />
      </svg>

      <div className="absolute top-[49px] right-0 flex w-[29px] flex-col border-t border-l border-[#777]">
        {taskTabs.map(([l, ic], i) => (
          <button key={l} aria-label={l} className={`flex h-[27px] items-center justify-center border-b border-[#888] ${i === 5 ? 'bg-white' : 'bg-[#e6e6e6]'}`}>
            {ic}
          </button>
        ))}
      </div>
      <button aria-label="折叠面板" className="absolute top-[357px] -left-px flex h-[46px] w-[11px] items-center justify-center border border-l-0 border-[#888] bg-white">
        <span className="size-[5px] rounded-full border border-[#999] bg-[#ddd]" />
      </button>
    </section>
  );
}

function BottomTabs() {
  const nav = ['M3 3v12M14 3L6 9l8 6z', 'M13 3L5 9l8 6z', 'M5 3l8 6-8 6z', 'M4 3l8 6-8 6zM15 3v12'];
  return (
    <div className="flex h-[18px] shrink-0 items-stretch pl-[23px] text-[14px] leading-[17px]">
      {nav.map((d, i) => (
        <button key={d} aria-label={['第一个', '上一个', '下一个', '最后一个'][i]} className="flex w-[18px] items-center justify-center border-t border-r border-t-black border-r-[#77778c] bg-[#aaaabf]">
          <svg width="13" height="13" viewBox="0 0 18 18" fill="#8888a0" stroke="#77778c" strokeWidth="1.500"><path d={d} /></svg>
        </button>
      ))}
      <button className="w-[55px] border-r border-[#888] bg-white">模型</button>
      <button className="w-[69px] border-t border-r border-[#888] bg-[#e3e3e1]">3D 视图</button>
      <button className="w-[97px] border-t border-r border-[#888] bg-[#e3e3e1] pr-3">运动算例 1</button>
      <span className="mr-[2px] flex-1 border-t border-r border-[#888]" />
    </div>
  );
}

/* ---------- right task pane ---------- */

function TaskPane() {
  return (
    <aside className="flex w-[275px] shrink-0 flex-col border-l border-[#777]">
      <div className="flex h-[22px] shrink-0 items-center border-b-2 border-[#222] bg-[#adb3b3] px-[8px]">
        <button aria-label="折叠" className="w-[16px]"><G d="M9 3L3 10l6 7M17 3l-6 7 6 7" c="#222" w={2.4} s={12} /></button>
        <h2 className="flex-1 text-center text-[14px] leading-5 font-medium">自定义属性</h2>
        <button aria-label="选项" className="mr-1"><GearIcon c="#333" s={15} /></button>
        <button aria-label="固定"><PinIcon c="#222" /></button>
      </div>
      <div className="mt-px ml-[4px] flex h-[32px] shrink-0 items-center gap-[6px] bg-gradient-to-b from-[#707486] to-[#9ca0b2] pr-[5px] pl-px text-[14px] text-[#8a8a8a]">
        <button className="h-[24px] flex-1 border border-[#c8c8d0] bg-white leading-5">应用</button>
        <button className="h-[24px] flex-1 border border-[#c8c8d0] bg-white leading-5">重设</button>
      </div>
      <p className="mt-[6px] mr-[5px] ml-[9px] h-[148px] bg-[#ffff84] pt-[6px] pl-[6px] font-['Noto_Sans','Noto_Sans_CJK_SC',sans-serif] text-[13px] leading-[17px] whitespace-nowrap">
        没找到自定义属性模板 'c:\programdata<br />
        \solidworks\solidworks 2018\lang<br />
        \chinese-simplified\自定义零件属性模<br />
        板-wujy（链接gb工程图模板）.prtprp'。<br />
        将模板放置在 'F:\1-教\05-Solidworks软<br />
        件及学习\SW配置和模板（wujiaoyi）\零<br />
        件自定义属性(WJY)\'，或从下选择另一模<br />
        板。
      </p>
      <div className="relative mt-[11px] mr-[5px] ml-[9px] flex shrink-0 items-center">
        <select aria-label="属性模板" className="h-[25px] w-full appearance-none border border-[#aaa] bg-gradient-to-b from-white to-[#f3f3f3] px-2 text-[13px]">
          <option value=""></option>
        </select>
        <svg width="6" height="5" viewBox="0 0 6 5" fill="none" stroke="#444" strokeWidth="1.400" className="pointer-events-none absolute right-[7px]"><path d="M0 0l3 4 3-4" /></svg>
      </div>
      <div className="mt-auto mb-px ml-[4px] flex h-[45px] shrink-0 items-center justify-center border-t border-[#555] bg-gradient-to-b from-[#707486] to-[#9498aa]">
        <button className="flex h-[24px] w-[119px] items-center justify-between border border-[#c8c8d0] bg-white pr-[3px] pl-3 text-[13px] text-[#8a8a8a]">
          更多属性<G d="M2 3h16v14M14 6v8" s={11} w={2} />
        </button>
      </div>
    </aside>
  );
}

function StatusBar() {
  return (
    <footer className="flex h-[20px] shrink-0 items-center border-t border-[#777] pr-[4px] pl-[2px] text-[13px] leading-[19px] whitespace-nowrap">
      <span>零件1</span>
      <span className="ml-auto w-[130px] text-[14px]">总长度: 108.89mm</span>
      <span className="w-[46px]">欠定义</span>
      <span className="h-4 w-px bg-[#ddd]" />
      <span className="mx-[5px] h-4 w-px bg-[#ddd]" />
      <span className="w-[87px] pl-1">在编辑 草图5</span>
      <span className="h-4 w-px bg-[#ddd]" />
      <svg width="6" height="11" viewBox="0 0 6 11" className="mr-[6px] ml-[16px]">
        <rect width="6" height="11" rx="1" fill="#3b1d12" />
        <circle cx="3" cy="3" r="1.800" fill="#d8352c" />
        <circle cx="3" cy="8" r="1.800" fill="#2f7d3a" />
      </svg>
      <span className="h-4 w-px bg-[#ddd]" />
      <span className="w-[158px] pl-[33px] text-[#b5b5b5]">自定义</span>
      <G d="M1 8l8-5 10 3-7 11zM4 8l7 4 5-6M7 6l6 3M5 12l7 5" c="#444" s={15} />
      <svg width="10" height="10" viewBox="0 0 10 10" fill="#bbb" className="mt-1 ml-2"><path d="M7 0h3v3H7zM7 4h3v3H7zM4 4h2v3H4zM7 8h3v2H7zM4 8h2v2H4zM0 8h3v2H0z" /></svg>
    </footer>
  );
}

/* ---------- desktop taskbar ---------- */

function BrowserE({ s }: { s: number }) {
  return (
    <svg width={s} height={s} viewBox="0 0 26 26" fill="none">
      <path d="M7 14h12.500A6.500 7 0 1 0 17 19" stroke="#6cc82a" strokeWidth="4" />
      <path d="M4 24C-3 18 12 2 24 2c1 2 0 4-1 5" stroke="#8ad84a" strokeWidth="1.800" />
    </svg>
  );
}

const apps: [string, ReactNode, string][] = [
  ['开始', <svg key="1" width="26" height="26" viewBox="0 0 26 26"><defs><linearGradient id="win" x1="0" y1="0" x2="1" y2="1"><stop offset="0" stopColor="#4fc3f7" /><stop offset="1" stopColor="#0a78d4" /></linearGradient></defs><path d="M0 0h12.500v12.500H0zM13.500 0H26v12.500H13.500zM0 13.500h12.500V26H0zM13.500 13.500H26V26H13.500z" fill="url(#win)" /></svg>, ''],
  ['文件资源管理器', <svg key="2" width="28" height="25" viewBox="0 0 28 25"><path d="M0 2a2 2 0 0 1 2-2h8l3 3h12a2 2 0 0 1 2 2v6H0z" fill="#e8a317" /><path d="M0 7l10 0 3-3h13a1 1 0 0 1 1 1v18a2 2 0 0 1-2 2H2a2 2 0 0 1-2-2z" fill="#fcd14f" /><path d="M4 25v-6a2 2 0 0 1 2-2h15a2 2 0 0 1 2 2v6z" fill="#1f7ac4" /><path d="M8 20h11v2H8z" fill="#0f5a9a" /></svg>, 'w-[7px] bg-[#8a8a8a]'],
  ['WPS', <svg key="3" width="28" height="20" viewBox="0 0 28 20" fill="none"><path d="M0 1h20l-1 3H8l4 10 3-7h4l-6 12H9L3 4z" fill="#e5322b" /><path d="M12 8h3l4 6 4-11-4 0 1-2h8l-8 18h-3z" fill="#e5322b" /><path d="M15 7l2-4h3l-3 8z" fill="#f79a85" /></svg>, 'w-[7px] bg-[#8a8a8a]'],
  ['录屏', <svg key="4" width="27" height="27" viewBox="0 0 27 27"><circle cx="14" cy="13" r="13" fill="#1473e0" /><path d="M1 14L2 26l10-2z" fill="#0d56b8" /><circle cx="14" cy="13" r="10" fill="#0b2d60" /><g fill="#3cc4f5"><circle cx="14" cy="7" r="2.600" /><circle cx="19.500" cy="11" r="2.600" /><circle cx="17.500" cy="18" r="2.600" /><circle cx="10.500" cy="18" r="2.600" /><circle cx="8.500" cy="11" r="2.600" /><circle cx="14" cy="13" r="1.500" /></g></svg>, 'w-[7px] bg-[#8a8a8a]'],
  ['SOLIDWORKS', (
    <svg key="5" width="30" height="32" viewBox="0 0 30 32" className="font-['Liberation_Sans']">
      <path d="M1 7l13-5 12 4v17l-12 6L1 24z" fill="#b5121b" />
      <path d="M1 7l13-5 12 4-12 5z" fill="#e2414a" />
      <path d="M14 11v18L1 24V7z" fill="#c9202a" />
      <text x="3" y="20" fontSize="12" fontWeight="700" fill="#fff">S</text>
      <text x="15" y="19" fontSize="11" fontWeight="700" fill="#fff">W</text>
      <text x="11" y="29" fontSize="7" fontWeight="700" fill="#fff" stroke="#111" strokeWidth="2" paintOrder="stroke">2019</text>
    </svg>
  ), 'w-[18px] bg-[#1a72c8]'],
  ['浏览器', <BrowserE key="6" s={26} />, 'w-[7px] bg-[#8a8a8a]'],
];

function Taskbar() {
  return (
    <div className="flex h-[54px] shrink-0 items-stretch bg-gradient-to-r from-[#fbfefe] via-[#fdf9fc] to-[#fbfefd] pl-[11px]">
      {apps.map(([l, ic, ind]) => (
        <button key={l} aria-label={l} className="relative flex w-[50px] items-center justify-center">
          {ic}
          {ind && <span className={`absolute bottom-[5px] h-[4px] rounded-full ${ind}`} />}
        </button>
      ))}
      <div className="ml-auto flex items-center pr-[20px]">
        <Btn label="显示隐藏的图标" w="w-[24px]"><G d="M2 14l8-8 8 8" c="#222" w={1.8} s={16} /></Btn>
        <Btn label="浏览器" w="w-[28px]"><BrowserE s={16} /></Btn>
        <Btn label="麦克风" w="w-[34px]">
          <svg width="13" height="18" viewBox="0 0 13 18" fill="none" stroke="#1a5a96" strokeWidth="1.400"><rect x="4" y="1" width="5" height="9" rx="2.500" fill="#bcd8ee" /><path d="M1 7c0 8 11 8 11 0M6.500 13v4" /></svg>
        </Btn>
        <button className="w-[38px] text-[17px]">中</button>
        <Btn label="网络" w="w-[34px]">
          <svg width="18" height="14" viewBox="0 0 18 14" fill="none" stroke="#222" strokeWidth="1.300"><path d="M1 5c5-5 11-5 16 0M4 8c3-3 7-3 10 0M6.500 10.500c2-1.500 3-1.500 5 0" /><circle cx="9" cy="12.500" r="1" fill="#222" /></svg>
        </Btn>
        <Btn label="音量" w="w-[20px]">
          <svg width="16" height="14" viewBox="0 0 16 14" fill="none" stroke="#222" strokeWidth="1.200"><path d="M1 5h3l4-4v12L4 9H1zM10 4c2 2 2 4 0 6M12 2c3 3 3 7 0 10" /></svg>
        </Btn>
        <Btn label="电池" w="w-[32px]">
          <svg width="19" height="15" viewBox="0 0 19 15"><path d="M3 5h13v9H3zM17 8h2v3h-2z" fill="#222" /><path d="M5 0L1 6h3l-1 4 4-6H5z" fill="#222" stroke="#fff" strokeWidth=".6" /></svg>
        </Btn>
        <div className="ml-[8px] w-[71px] pb-1 text-right text-[13px] leading-[18px]">
          <div>17:00</div>
          <div>2024/11/24</div>
        </div>
      </div>
    </div>
  );
}

export default function App() {
  return (
    <div className="relative flex h-screen min-h-[760px] flex-col overflow-hidden bg-gradient-to-r from-[#dde2e5] via-[#c4c8c9] to-[#d4dade] font-['Noto_Sans_CJK_SC',sans-serif] text-black">
      <span className="absolute top-[183px] right-[4px] size-[26px] rounded-full border-2 border-[#e8eef4] bg-[#3f6fc4]" />
      <main className="relative mx-[9px] mt-[2px] mb-[9px] flex min-h-0 flex-1 flex-col overflow-hidden rounded-[8px] bg-white shadow-[0_0_2px_#777]">
        <TitleBar />
        <ToolStrip />
        <StateStrip />
        <Ribbon />
        <div className="flex min-h-0 flex-1">
          <div className="flex min-w-0 flex-1 flex-col">
            <CommandTabs />
            <div className="flex min-h-0 flex-1">
              <SideStrip />
              <div className="flex min-w-0 flex-1 flex-col">
                <div className="flex min-h-0 flex-1">
                  <PropertyPanel />
                  <Viewport />
                </div>
                <BottomTabs />
              </div>
            </div>
          </div>
          <TaskPane />
        </div>
        <StatusBar />
      </main>
      <span className="absolute bottom-[54px] left-[300px] h-[9px] w-px bg-[#222]" />
      <span className="absolute right-[238px] bottom-[54px] h-[9px] w-px bg-[#222]" />
      <div className="absolute right-[84px] bottom-[63px] flex size-[58px] items-center justify-center rounded-full border-[3px] border-white bg-gradient-to-tr from-[#6cc8ff] to-[#2f86ff] text-[15px] text-white">
        09:39
      </div>
      <Taskbar />
    </div>
  );
}
